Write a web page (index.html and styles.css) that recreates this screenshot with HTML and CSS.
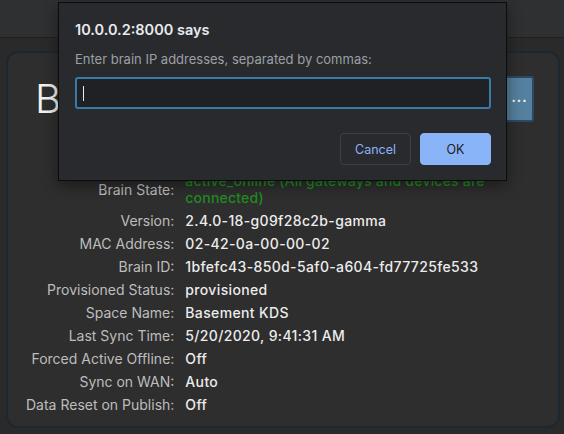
FILE: index.html
```html
<!DOCTYPE html>
<html lang="en">
<head>
<meta charset="utf-8">
<title>Brain Details</title>
<link rel="stylesheet" href="styles.css">
</head>
<body>
<div class="topbar"></div>
<main class="card">
  <div class="card-head">
    <h1 class="title">Brain</h1>
    <button class="more" type="button">...</button>
  </div>
  <table class="details">
    <tbody>
      <tr><td class="lbl">Brain State:</td><td class="val state">active_online (All gateways and devices are connected)</td></tr>
      <tr><td class="lbl">Version:</td><td class="val">2.4.0-18-g09f28c2b-gamma</td></tr>
      <tr><td class="lbl">MAC Address:</td><td class="val">02-42-0a-00-00-02</td></tr>
      <tr><td class="lbl">Brain ID:</td><td class="val">1bfefc43-850d-5af0-a604-fd77725fe533</td></tr>
      <tr><td class="lbl">Provisioned Status:</td><td class="val">provisioned</td></tr>
      <tr><td class="lbl">Space Name:</td><td class="val">Basement KDS</td></tr>
      <tr><td class="lbl">Last Sync Time:</td><td class="val">5/20/2020, 9:41:31 AM</td></tr>
      <tr><td class="lbl">Forced Active Offline:</td><td class="val">Off</td></tr>
      <tr><td class="lbl">Sync on WAN:</td><td class="val">Auto</td></tr>
      <tr><td class="lbl">Data Reset on Publish:</td><td class="val">Off</td></tr>
    </tbody>
  </table>
</main>

<div class="dialog" role="dialog">
  <div class="dlg-title">10.0.0.2:8000 says</div>
  <div class="dlg-msg">Enter brain IP addresses, separated by commas:</div>
  <div class="dlg-input"><span class="caret"></span></div>
  <div class="dlg-actions">
    <button class="btn cancel" type="button">Cancel</button>
    <button class="btn ok" type="button">OK</button>
  </div>
</div>
</body>
</html>
```

FILE: styles.css
```css
* { box-sizing: border-box; }

html, body {
  margin: 0;
  padding: 0;
}

body {
  background: #2a2a2a;
  font-family: Inter, "Noto Sans", "Liberation Sans", sans-serif;
  color: #e8e8e8;
  width: 564px;
  height: 434px;
  overflow: hidden;
  position: relative;
}

.topbar {
  height: 38px;
  background: #2f3032;
  border-bottom: 1px solid #202020;
}

.card {
  margin: 13px 4px 0 6px;
  height: 377px;
  background: #2e2e2e;
  border: 2px solid #1d2733;
  border-radius: 12px;
  padding: 23px 24px 10px 13px;
}

.card-head {
  display: flex;
  align-items: center;
  justify-content: space-between;
  height: 46px;
}

.title {
  margin: 0 0 0 14px;
  font-size: 40px;
  font-weight: 300;
  color: #f2f2f2;
  line-height: 46px;
}

.more {
  width: 32px;
  height: 46px;
  background: #56809f;
  border: 2px solid #2c4963;
  border-radius: 3px;
  color: #f4f4f4;
  font-family: Inter, sans-serif;
  font-size: 13px;
  font-weight: 700;
  letter-spacing: 1px;
  padding: 0 0 4px 3px;
}

.details {
  margin-top: 47px;
  border-collapse: collapse;
  font-size: 14px;
  line-height: 17px;
}

.details td {
  padding: 3px 5px;
  vertical-align: middle;
}

.lbl {
  text-align: right;
  white-space: nowrap;
  color: #bdbdbd;
  padding-right: 4px !important;
}

.val {
  width: 320px;
  color: #ececec;
  font-weight: 500;
  letter-spacing: 0.35px;
  padding-left: 7px !important;
}

.val.state {
  color: #1f8d1f;
  font-weight: 500;
  letter-spacing: 0.2px;
}

/* Browser prompt overlay */
.dialog {
  position: absolute;
  left: 58px;
  top: 2px;
  width: 449px;
  height: 179px;
  background: #292a2d;
  border: 1px solid #0c0c0c;
  box-shadow: 0 4px 14px rgba(0, 0, 0, 0.45);
  padding: 17px 15px 0 16px;
}

.dlg-title {
  font-size: 14.5px;
  font-weight: 600;
  line-height: 20px;
  color: #e8eaed;
}

.dlg-msg {
  margin-top: 11px;
  font-size: 13px;
  line-height: 16px;
  color: #9aa0a6;
}

.dlg-input {
  margin-top: 10px;
  height: 32px;
  background: #202124;
  border: 2px solid #3a7aa8;
  border-radius: 3px;
  display: flex;
  align-items: center;
  padding-left: 6px;
}

.caret {
  width: 1px;
  height: 15px;
  background: #e8eaed;
}

.dlg-actions {
  margin-top: 24px;
  display: flex;
  justify-content: flex-end;
  gap: 9px;
}

.btn {
  height: 32px;
  border-radius: 4px;
  font-family: Inter, sans-serif;
  font-size: 12.5px;
  padding: 0;
}

.cancel {
  width: 71px;
  background: transparent;
  border: 1px solid #3c4043;
  color: #8ab4f8;
}

.ok {
  width: 71px;
  background: #8ab4f8;
  border: 1px solid #8ab4f8;
  color: #202124;
}
```
